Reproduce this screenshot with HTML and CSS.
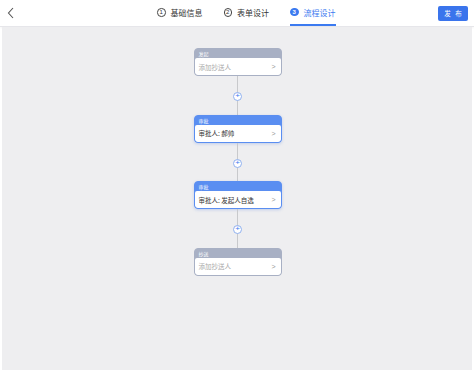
FILE: index.html
```html
<!DOCTYPE html>
<html lang="zh">
<head>
    <meta charset="UTF-8">
    <title>流程设计</title>
    <link rel="stylesheet" href="styles.css">
</head>
<body>
    <!-- Top Bar -->
    <div class="topbar">
        <div class="back">
            <svg width="8" height="12" viewBox="0 0 8 12"><path d="M6 1 L1.5 6 L6 11" fill="none" stroke="#555" stroke-width="1.1"/></svg>
        </div>
        <div class="steps">
            <div class="step"><span class="num">1</span>基础信息</div>
            <div class="step"><span class="num">2</span>表单设计</div>
            <div class="step active"><span class="num">3</span>流程设计</div>
        </div>
        <button class="publish">发 布</button>
    </div>

    <!-- Flow Canvas -->
    <div class="canvas">
        <div class="node grey">
            <div class="node-head">发起</div>
            <div class="node-body placeholder">添加抄送人<span class="arrow">&gt;</span></div>
        </div>
        <div class="link"><span class="add">+</span></div>
        <div class="node blue">
            <div class="node-head">审批</div>
            <div class="node-body">审批人: 郝帅<span class="arrow">&gt;</span></div>
        </div>
        <div class="link"><span class="add">+</span></div>
        <div class="node blue">
            <div class="node-head">审批</div>
            <div class="node-body">审批人: 发起人自选<span class="arrow">&gt;</span></div>
        </div>
        <div class="link"><span class="add">+</span></div>
        <div class="node grey">
            <div class="node-head">抄送</div>
            <div class="node-body placeholder">添加抄送人<span class="arrow">&gt;</span></div>
        </div>
    </div>
</body>
</html>
```
FILE: styles.css
```css
* {
    margin: 0;
    padding: 0;
    box-sizing: border-box;
}

body {
    font-family: 'Noto Sans CJK SC', 'Liberation Sans', sans-serif;
    background: #fff;
    width: 474px;
    height: 373px;
    color: #333;
}

/* Top Bar */
.topbar {
    height: 27px;
    display: flex;
    align-items: center;
    border-bottom: 1px solid #e6e6ea;
    box-shadow: 0 1px 2px rgba(0, 0, 0, 0.04);
}

.back {
    width: 22px;
    padding-left: 7px;
    display: flex;
    align-items: center;
}

.steps {
    display: flex;
    gap: 21px;
    margin-left: 135px;
    height: 100%;
}

.step {
    display: flex;
    align-items: center;
    gap: 5px;
    font-size: 8px;
    color: #333;
    height: 100%;
    padding-bottom: 1px;
}

.step .num {
    width: 8.5px;
    height: 8.5px;
    border: 0.8px solid #444;
    border-radius: 50%;
    font-size: 6px;
    line-height: 7px;
    text-align: center;
    font-family: 'Liberation Sans', sans-serif;
}

.step.active {
    color: #3b7af0;
    border-bottom: 2px solid #3b7af0;
    padding-bottom: 0;
    margin-bottom: -1px;
}

.step.active .num {
    background: #3b7af0;
    border-color: #3b7af0;
    color: #fff;
    font-weight: bold;
}

.publish {
    margin-left: auto;
    margin-right: 6px;
    width: 30px;
    height: 15px;
    background: #3a74ec;
    border: none;
    border-radius: 2px;
    color: #fff;
    font-size: 6.5px;
    letter-spacing: 1.5px;
    padding-left: 1.5px;
    font-family: 'Noto Sans CJK SC', sans-serif;
}

/* Flow Canvas */
.canvas {
    margin: 0 2px;
    height: 343px;
    background: #eeeef0;
    display: flex;
    flex-direction: column;
    align-items: center;
    padding-top: 21px;
}

.node {
    width: 88px;
    border: 1.5px solid;
    border-radius: 4px;
    overflow: hidden;
    margin-left: 1px;
}

.node.grey {
    border-color: #a8b0c4;
    background: #a8b0c4;
}

.node.blue {
    border-color: #5a8ef1;
    background: #5a8ef1;
    box-shadow: 0 1px 3px rgba(60, 110, 220, 0.25);
}

.node-head {
    height: 9px;
    font-size: 5px;
    line-height: 9px;
    color: #fff;
    padding-left: 4px;
}

.node-body {
    height: 17px;
    background: #fff;
    border-radius: 2px;
    display: flex;
    align-items: center;
    justify-content: space-between;
    padding: 0 5px 0 4px;
    font-size: 6.5px;
    color: #333;
}

.node-body.placeholder {
    color: #aaa;
}

.arrow {
    color: #999;
    font-size: 7px;
    font-family: 'Liberation Sans', sans-serif;
}

.link {
    width: 1px;
    height: 38.5px;
    background: #c8c9cc;
    display: flex;
    align-items: center;
    justify-content: center;
    margin-left: 1px;
}

.add {
    flex: none;
    width: 9px;
    height: 9px;
    border: 1px solid #8fb0ef;
    border-radius: 50%;
    background: #fff;
    color: #3b7af0;
    font-size: 8px;
    line-height: 6px;
    text-align: center;
    font-family: 'Liberation Sans', sans-serif;
    margin-top: 3px;
}
```
